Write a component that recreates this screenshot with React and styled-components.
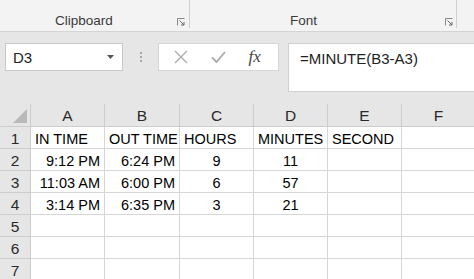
import styled, { createGlobalStyle } from "styled-components";

const GlobalStyle = createGlobalStyle`
body {
  margin: 0;
  background: #e6e6e6;
  overflow: hidden;
}
`

const Page = styled.div`
width: 474px;
height: 279px;
display: flex;
flex-direction: column;
overflow: hidden;
font-family: "Liberation Sans", Arial, sans-serif;
`

const Ribbon = styled.div`
height: 31px;
flex-shrink: 0;
display: flex;
background: #f3f3f3;
border-bottom: 1px solid #d4d4d4;
`

const Group = styled.div`
position: relative;
width: ${p => p.w}px;
flex-shrink: 0;
display: flex;
justify-content: center;
align-items: flex-end;
padding: 0 ${p => p.shift}px 3px 0;
box-sizing: border-box;
color: #3a3a3a;
font-size: 13.5px;
&:after {
  content: "";
  position: absolute;
  right: 0;
  top: 0;
  bottom: 3px;
  width: 1px;
  background: #d0d0d0;
}
`

const Launcher = styled.svg`
position: absolute;
right: ${p => p.r}px;
bottom: 5px;
`

const FormulaBar = styled.div`
height: 72px;
flex-shrink: 0;
display: flex;
align-items: flex-start;
padding: 11px 0 0 5px;
box-sizing: border-box;
`

const NameBox = styled.div`
width: 118px;
height: 28px;
box-sizing: border-box;
background: #fff;
border: 1px solid #c8c8c8;
display: flex;
align-items: center;
justify-content: space-between;
padding: 0 8px 0 7px;
font-size: 15px;
color: #222;
`

const Dots = styled.div`
width: 35px;
height: 28px;
display: flex;
flex-direction: column;
align-items: center;
justify-content: center;
gap: 2px;
span {
  width: 2px;
  height: 2px;
  background: #a8a8a8;
}
`

const FxBox = styled.div`
width: 121px;
height: 28px;
box-sizing: border-box;
background: #fff;
border: 1px solid #d6d6d6;
display: flex;
align-items: center;
justify-content: space-around;
padding: 0 6px 0 4px;
`

const Fx = styled.span`
font-family: "Liberation Serif", "Times New Roman", serif;
font-style: italic;
font-size: 17px;
color: #444;
`

const FormulaInput = styled.div`
margin-left: 9px;
flex: 1;
height: 49px;
box-sizing: border-box;
background: #fff;
border: 1px solid #d0d0d0;
border-right: none;
padding: 6px 0 0 11px;
font-size: 15px;
color: #222;
`

const Grid = styled.div`
display: grid;
grid-template-columns: 31px 74px 75px 74px 74px 74px 74px;
grid-auto-rows: 22px;
grid-template-rows: 23px;
background: #fff;
`

const Head = styled.div`
background: #e6e6e6;
border-right: 1px solid #cccccc;
border-bottom: 1px solid #cccccc;
display: flex;
align-items: center;
justify-content: center;
font-size: 15.5px;
color: #2a2a2a;
padding-top: 2px;
box-sizing: border-box;
`

const Corner = styled(Head)`
align-items: flex-end;
justify-content: flex-end;
padding: 0 3px 3px 0;
`

const Cell = styled.div`
border-right: 1px solid #d6d6d6;
border-bottom: 1px solid #d6d6d6;
display: flex;
align-items: center;
justify-content: ${p => p.align === "right" ? "flex-end" : p.align === "center" ? "center" : "flex-start"};
padding: 3px 4px 0 4px;
box-sizing: border-box;
font-size: 14.5px;
color: #000;
white-space: nowrap;
overflow: visible;
`

const cols = ["A", "B", "C", "D", "E", "F"];

const rows = [
    [["IN TIME", "left"], ["OUT TIME", "left"], ["HOURS", "left"], ["MINUTES", "left"], ["SECOND", "left"], ["", "left"]],
    [["9:12 PM", "right"], ["6:24 PM", "right"], ["9", "center"], ["11", "center"], ["", "left"], ["", "left"]],
    [["11:03 AM", "right"], ["6:00 PM", "right"], ["6", "center"], ["57", "center"], ["", "left"], ["", "left"]],
    [["3:14 PM", "right"], ["6:35 PM", "right"], ["3", "center"], ["21", "center"], ["", "left"], ["", "left"]],
    [["", "left"], ["", "left"], ["", "left"], ["", "left"], ["", "left"], ["", "left"]],
    [["", "left"], ["", "left"], ["", "left"], ["", "left"], ["", "left"], ["", "left"]],
    [["", "left"], ["", "left"], ["", "left"], ["", "left"], ["", "left"], ["", "left"]],
];

const LauncherIcon = ({ r }) => (
    <Launcher r={r} width="8" height="8" viewBox="0 0 8 8">
        <path d="M0.5 7.5V0.5H7.5" fill="none" stroke="#888" strokeWidth="1" />
        <path d="M2.5 2.5L7 7M7 4V7H4" fill="none" stroke="#666" strokeWidth="1" />
    </Launcher>
);

const App = () => {
    return (
        <Page>
            <GlobalStyle />
            <Ribbon>
                <Group w={190} shift={22}>
                    Clipboard
                    <LauncherIcon r={5} />
                </Group>
                <Group w={267} shift={40}>
                    Font
                    <LauncherIcon r={4} />
                </Group>
            </Ribbon>

            <FormulaBar>
                <NameBox>
                    D3
                    <svg width="7" height="4" viewBox="0 0 7 4">
                        <path d="M0 0H7L3.5 4Z" fill="#555" />
                    </svg>
                </NameBox>
                <Dots><span /><span /><span /></Dots>
                <FxBox>
                    <svg width="14" height="14" viewBox="0 0 14 14">
                        <path d="M1 1L13 13M13 1L1 13" stroke="#aaa" strokeWidth="1.3" />
                    </svg>
                    <svg width="15" height="12" viewBox="0 0 15 12">
                        <path d="M1 6.5L5.5 11L14 1" fill="none" stroke="#aaa" strokeWidth="1.8" />
                    </svg>
                    <Fx>fx</Fx>
                </FxBox>
                <FormulaInput>=MINUTE(B3-A3)</FormulaInput>
            </FormulaBar>

            <Grid>
                <Corner>
                    <svg width="14" height="14" viewBox="0 0 14 14">
                        <path d="M14 0V14H0Z" fill="#b9b9b9" />
                    </svg>
                </Corner>
                {cols.map(c => <Head key={c}>{c}</Head>)}
                {rows.map((row, i) => [
                    <Head key={"h" + i}>{i + 1}</Head>,
                    ...row.map(([text, align], j) => (
                        <Cell key={i + "-" + j} align={align}>{text}</Cell>
                    )),
                ])}
            </Grid>
        </Page>
    );
}

export default App;
